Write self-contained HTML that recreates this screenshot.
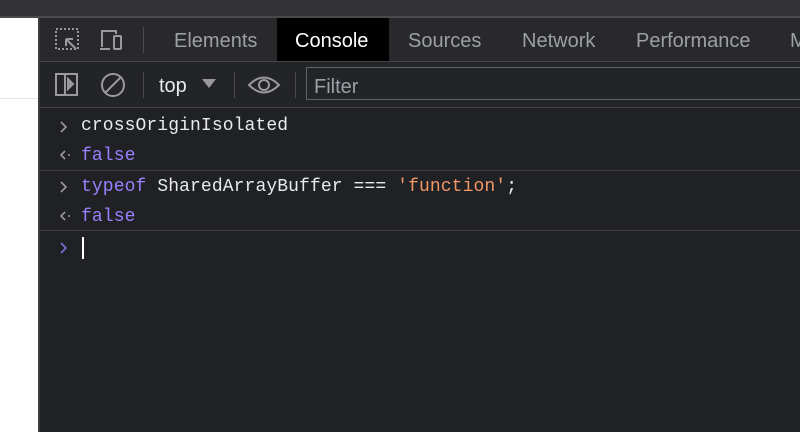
<!DOCTYPE html><html><head><style>
body{margin:0;width:800px;height:432px;overflow:hidden;background:#202124;position:relative;font-family:"Liberation Sans",sans-serif}
.a{position:absolute}
.mono{font-family:"Liberation Mono",monospace;font-size:18px;position:absolute;left:81px;color:#e8eaed;white-space:pre;letter-spacing:0.1px}
</style></head><body>
<div class="a" style="left:0;top:0;width:800px;height:16px;background:#333336"></div>
<div class="a" style="left:0;top:16px;width:800px;height:2px;background:#4a4a4d"></div>
<div class="a" style="left:0;top:18px;width:38px;height:414px;background:#fff"></div>
<div class="a" style="left:0;top:98px;width:38px;height:1px;background:#e6e6e6"></div>
<div class="a" style="left:38px;top:18px;width:2px;height:414px;background:#3c3c3f"></div>
<div class="a" style="left:40px;top:18px;width:760px;height:43px;background:#29292c"></div>
<div class="a" style="left:40px;top:61px;width:760px;height:1px;background:#45454a"></div>
<div class="a" style="left:40px;top:62px;width:760px;height:45px;background:#232427"></div>
<div class="a" style="left:40px;top:107px;width:760px;height:1px;background:#45454a"></div>
<svg class="a" style="left:40px;top:18px" width="120" height="90" fill="none" stroke="#9a9a9e" stroke-width="2">
<rect x="16" y="11" width="22" height="20" stroke-dasharray="2 2"/>
<path d="M26 21 L36 31 M26 21 h7 M26 21 v7" stroke="#9a9a9e"/>
<path d="M60 31 h10 M62 29 V13 h14 v3" /><rect x="74" y="18" width="7" height="13" rx="1"/>
<rect x="16" y="56" width="21" height="21"/><path d="M25 56 v21"/><path d="M28 61 l5 5 -5 5z" fill="#9a9a9e"/>
<circle cx="73" cy="67" r="11"/><path d="M65 75 L81 59"/>
</svg>
<div class="a" style="left:143px;top:27px;width:1px;height:26px;background:#4a4a4d"></div>
<div class="a" style="left:143px;top:72px;width:1px;height:26px;background:#4a4a4d"></div>
<div class="a" style="left:234px;top:72px;width:1px;height:26px;background:#4a4a4d"></div>
<div class="a" style="left:295px;top:72px;width:1px;height:26px;background:#4a4a4d"></div>
<div class="a" style="left:277px;top:18px;width:112px;height:43px;background:#000"></div>
<div class="a" style="top:30px;font-size:20px;color:#9aa0a6;left:174px">Elements</div>
<div class="a" style="top:30px;font-size:20px;color:#fff;left:295px">Console</div>
<div class="a" style="top:30px;font-size:20px;color:#9aa0a6;left:408px">Sources</div>
<div class="a" style="top:30px;font-size:20px;color:#9aa0a6;left:522px">Network</div>
<div class="a" style="top:30px;font-size:20px;color:#9aa0a6;left:636px">Performance</div>
<div class="a" style="top:30px;font-size:20px;color:#9aa0a6;left:790px">M</div>
<div class="a" style="top:75px;font-size:20px;color:#e8eaed;left:159px">top</div>
<svg class="a" style="left:202px;top:79px" width="14" height="10"><path d="M0 0h14L7 9z" fill="#9a9a9e"/></svg>
<svg class="a" style="left:247px;top:72px" width="34" height="26" fill="none" stroke="#9a9a9e" stroke-width="2"><path d="M2 13 Q17 -2 32 13 Q17 28 2 13z"/><circle cx="17" cy="13" r="5"/></svg>
<div class="a" style="left:306px;top:67px;width:500px;height:33px;border:1px solid #5f6368;box-sizing:border-box"></div>
<div class="a" style="top:76px;font-size:20px;color:#9aa0a6;left:314px">Filter</div>
<div class="a" style="left:40px;top:170px;width:760px;height:1px;background:#3c3c3f"></div>
<div class="a" style="left:40px;top:230px;width:760px;height:1px;background:#3c3c3f"></div>
<svg class="a" style="left:55px;top:116px" width="20" height="150" fill="none" stroke-width="1.6">
<path d="M6 6l5 5-5 5" stroke="#9a9a9e"/>
<path d="M10 35l-4 4 4 4" stroke="#9a9a9e"/><circle cx="14" cy="39" r="1" fill="#9a9a9e" stroke="none"/>
<path d="M6 66l5 5-5 5" stroke="#9a9a9e"/>
<path d="M10 96l-4 4 4 4" stroke="#9a9a9e"/><circle cx="14" cy="100" r="1" fill="#9a9a9e" stroke="none"/>
<path d="M6 127l5 5-5 5" stroke="#7c6cd8"/>
</svg>
<div class="mono" style="top:116px">crossOriginIsolated</div>
<div class="mono" style="top:146px;color:#9980ff">false</div>
<div class="mono" style="top:177px"><span style="color:#9980ff">typeof</span> SharedArrayBuffer === <span style="color:#f29766">'function'</span>;</div>
<div class="mono" style="top:207px;color:#9980ff">false</div>
<div class="a" style="left:82px;top:237px;width:2px;height:22px;background:#fff"></div>
</body></html>
